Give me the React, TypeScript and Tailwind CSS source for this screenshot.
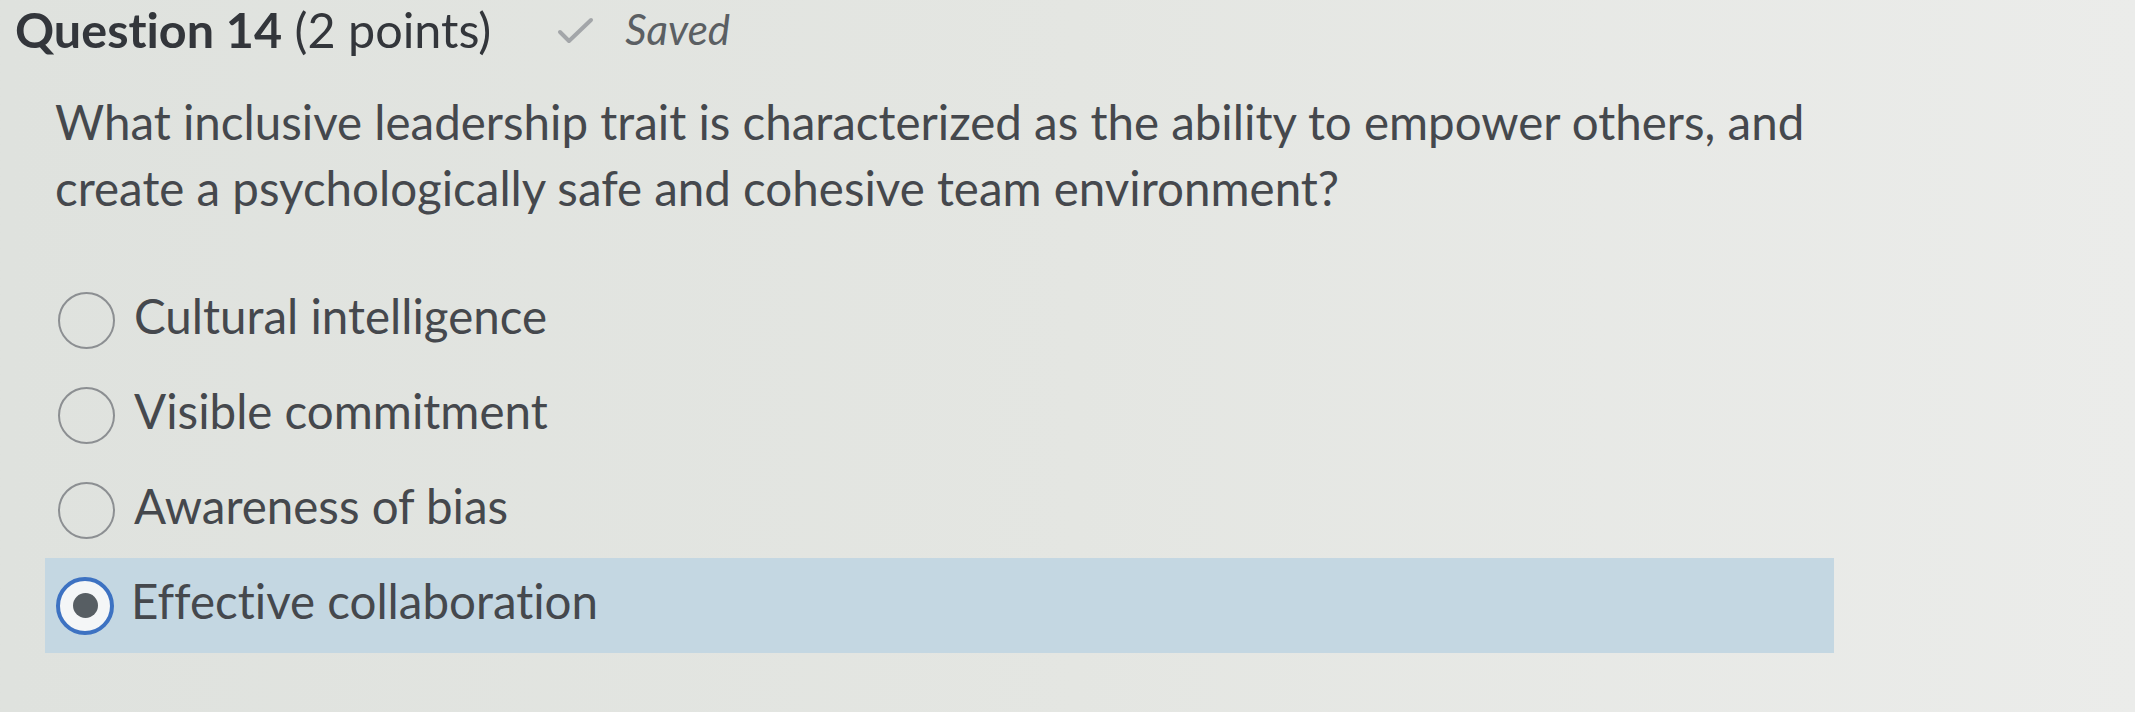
const options = [
  "Cultural intelligence",
  "Visible commitment",
  "Awareness of bias",
  "Effective collaboration",
];

function Radio({ checked }: { checked: boolean }) {
  if (checked) {
    return (
      <span className="flex h-[58px] w-[58px] shrink-0 items-center justify-center rounded-full border-[4px] border-[#3d72c2] bg-[#f4f6f7]">
        <span className="h-[25px] w-[25px] rounded-full bg-[#575e63]" />
      </span>
    );
  }
  return (
    <span className="h-[57px] w-[57px] shrink-0 rounded-full border-2 border-[#8c8f92] bg-transparent" />
  );
}

export default function App() {
  const selected = 3;

  return (
    <div
      className="h-[712px] w-full overflow-hidden bg-linear-to-r from-[#dfe2de] via-[#e4e6e2] to-[#ebecea] text-[#45484d] [font-variant-ligatures:none]"
      style={{ fontFamily: "Lato, 'Open Sans', sans-serif" }}
    >
      {/* header */}
      <div className="flex items-center pl-[15px]">
        <h2 className="text-[48.5px] leading-[59px] text-[#33363b]">
          <span className="font-bold">Question 14</span>{" "}
          <span className="font-normal">(2 points)</span>
        </h2>
        <svg
          className="ml-[66px] mt-[2px]"
          width="38"
          height="28"
          viewBox="0 0 38 28"
          fill="none"
        >
          <path
            d="M3 15 L12 24 L34 3"
            stroke="#a3a6a9"
            strokeWidth="4"
            strokeLinecap="round"
            strokeLinejoin="round"
          />
        </svg>
        <span className="ml-[30px] text-[42px] italic leading-[55px] text-[#5b5f63]">
          Saved
        </span>
      </div>

      {/* question */}
      <p className="mt-[30px] pl-[55px] text-[47.5px] leading-[66px]">
        What inclusive leadership trait is characterized as the ability to
        empower others, and
        <br />
        create a psychologically safe and cohesive team environment?
      </p>

      {/* answers */}
      <div className="mt-[52px] w-[1834px] pl-[45px]">
        {options.map((opt, i) => (
          <label
            key={opt}
            className={
              i === selected
                ? "flex h-[95px] items-center gap-[17px] bg-[#c4d7e2] pl-[11px]"
                : "flex h-[95px] items-center gap-[19px] pl-[13px]"
            }
          >
            <Radio checked={i === selected} />
            <span className="pb-[9px] text-[47.5px] leading-none">{opt}</span>
          </label>
        ))}
      </div>
    </div>
  );
}
